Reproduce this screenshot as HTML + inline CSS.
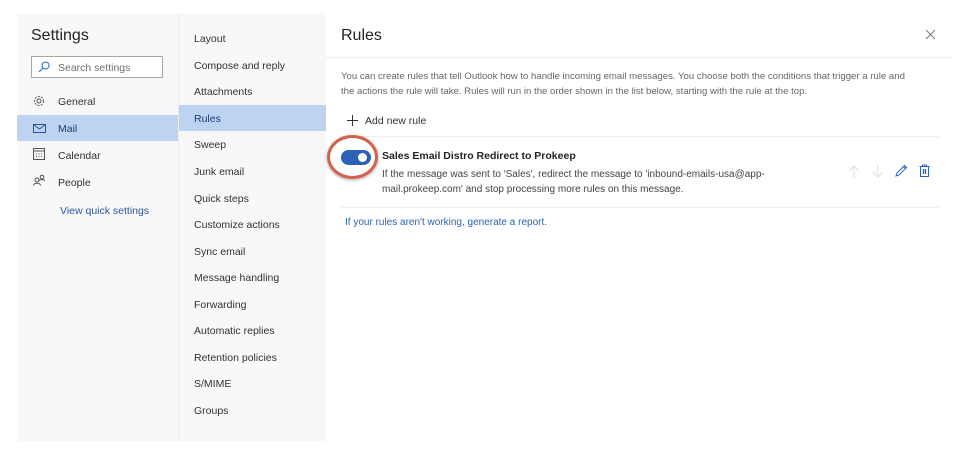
<!DOCTYPE html>
<html><head><style>
*{margin:0;padding:0;box-sizing:border-box}
body{width:980px;height:462px;background:#fff;font-family:"Liberation Sans",sans-serif;position:relative;overflow:hidden;color:#323130}
.a{position:absolute}
.nav{left:17px;top:13px;width:161px;height:428px;background:#f8f8f8}
.mid{left:178px;top:13px;width:148px;height:428px;background:#f8f8f8;border-left:1px solid #ececec}
.mi{position:absolute;left:15px;font-size:10.5px;color:#323130;white-space:nowrap}
.ni{position:absolute;left:41px;font-size:10.5px}
.ic{position:absolute;left:16px}
</style></head><body>
<div class="a nav">
 <div class="a" style="left:14px;top:14px;font-size:16px;color:#252423">Settings</div>
 <div class="a" style="left:14px;top:43px;width:132px;height:22px;border:1px solid #a6a6a6;background:#fff">
  <svg class="a" style="left:6px;top:4px" width="12" height="12" viewBox="0 0 12 12"><circle cx="7.5" cy="4.5" r="3.5" fill="none" stroke="#2b6ac2" stroke-width="1"/><path d="M5 7L1 11" stroke="#2b6ac2" stroke-width="1.1"/></svg>
  <div class="a" style="left:26px;top:5px;font-size:10.5px;color:#707070">Search settings</div>
 </div>
 <svg class="ic" style="top:82px" width="12" height="12" viewBox="0 0 12 12"><circle cx="6" cy="6" r="2" fill="none" stroke="#555"/><circle cx="6" cy="6" r="4.5" fill="none" stroke="#555" stroke-dasharray="2 1.3"/></svg>
 <div class="ni" style="top:83px">General</div>
 <div class="a" style="left:0;top:102px;width:161px;height:26px;background:#bcd4f2"></div>
 <svg class="ic" style="top:111px" width="13" height="9" viewBox="0 0 13 9"><rect x="0.5" y="0.5" width="12" height="8" fill="none" stroke="#2b579a"/><path d="M0.5 0.5L6.5 5L12.5 0.5" fill="none" stroke="#2b579a"/></svg>
 <div class="ni" style="top:110px;color:#1f3f73">Mail</div>
 <svg class="ic" style="top:135px" width="12" height="12" viewBox="0 0 12 12"><rect x="0.5" y="0.5" width="11" height="11" fill="none" stroke="#555"/><path d="M0.5 3h11M3 6h1M5.5 6h1M8 6h1M3 8.5h1M5.5 8.5h1M8 8.5h1" stroke="#555"/></svg>
 <div class="ni" style="top:137px">Calendar</div>
 <svg class="ic" style="top:161px" width="13" height="12" viewBox="0 0 13 12"><circle cx="4" cy="6" r="2" fill="none" stroke="#555"/><path d="M0.5 11.5c0-3 7-3 7 0" fill="none" stroke="#555"/><circle cx="9" cy="3" r="1.8" fill="none" stroke="#555"/><path d="M6.5 7c0-2 5-2 5 0" fill="none" stroke="#555"/></svg>
 <div class="ni" style="top:164px">People</div>
 <div class="a" style="left:43px;top:192px;font-size:10.5px;color:#2b579a">View quick settings</div>
</div>
<div class="a mid">
 <div class="mi" style="top:20px">Layout</div>
 <div class="mi" style="top:47px">Compose and reply</div>
 <div class="mi" style="top:73px">Attachments</div>
 <div class="a" style="left:0;top:92px;width:147px;height:26px;background:#bcd4f2"></div>
 <div class="mi" style="top:100px;color:#1f3f73">Rules</div>
 <div class="mi" style="top:126px">Sweep</div>
 <div class="mi" style="top:153px">Junk email</div>
 <div class="mi" style="top:180px">Quick steps</div>
 <div class="mi" style="top:206px">Customize actions</div>
 <div class="mi" style="top:233px">Sync email</div>
 <div class="mi" style="top:259px">Message handling</div>
 <div class="mi" style="top:286px">Forwarding</div>
 <div class="mi" style="top:312px">Automatic replies</div>
 <div class="mi" style="top:339px">Retention policies</div>
 <div class="mi" style="top:365px">S/MIME</div>
 <div class="mi" style="top:392px">Groups</div>
</div>
<div class="a" style="left:341px;top:27px;font-size:16px;color:#252423">Rules</div>
<svg class="a" style="left:925px;top:29px" width="11" height="11" viewBox="0 0 11 11"><path d="M1 1L10 10M10 1L1 10" stroke="#777" stroke-width="1"/></svg>
<div class="a" style="left:326px;top:57px;width:627px;height:1px;background:#ededed"></div>
<div class="a" style="left:341px;top:69px;width:566px;font-size:9.6px;line-height:15px;color:#666">You can create rules that tell Outlook how to handle incoming email messages. You choose both the conditions that trigger a rule and the actions the rule will take. Rules will run in the order shown in the list below, starting with the rule at the top.</div>
<svg class="a" style="left:347px;top:115px" width="11" height="11" viewBox="0 0 11 11"><path d="M5.5 0V11M0 5.5H11" stroke="#333" stroke-width="1"/></svg>
<div class="a" style="left:365px;top:115px;font-size:10.5px">Add new rule</div>
<div class="a" style="left:341px;top:136px;width:598px;height:1px;background:#efefef"></div>
<div class="a" style="left:327px;top:135px;width:51px;height:44px;border:3px solid #d4614d;border-radius:50%;box-shadow:0 1px 3px rgba(0,0,0,.35)"></div>
<div class="a" style="left:341px;top:150px;width:30px;height:15px;border-radius:8px;background:#2b62b7"></div>
<div class="a" style="left:358px;top:153px;width:9px;height:9px;border-radius:50%;background:#fff"></div>
<div class="a" style="left:382px;top:150px;font-size:10.5px;font-weight:bold;color:#252423">Sales Email Distro Redirect to Prokeep</div>
<div class="a" style="left:382px;top:167px;width:420px;font-size:10px;line-height:15px;color:#444">If the message was sent to 'Sales', redirect the message to 'inbound-emails-usa@app-mail.prokeep.com' and stop processing more rules on this message.</div>
<svg class="a" style="left:848px;top:165px" width="12" height="13" viewBox="0 0 12 13"><path d="M6 13V1M1 6L6 1L11 6" fill="none" stroke="#ddd"/></svg>
<svg class="a" style="left:872px;top:165px" width="12" height="13" viewBox="0 0 12 13"><path d="M6 0V12M1 7L6 12L11 7" fill="none" stroke="#ddd"/></svg>
<svg class="a" style="left:895px;top:164px" width="13" height="13" viewBox="0 0 13 13"><path d="M1 12L2 9L9.5 1.5L11.5 3.5L4 11Z M8.5 2.5L10.5 4.5" fill="none" stroke="#2b62b7"/></svg>
<svg class="a" style="left:919px;top:164px" width="11" height="13" viewBox="0 0 11 13"><path d="M0.5 2.5H10.5M3.5 2.5V1H7.5V2.5M1.5 2.5V12.5H9.5V2.5" fill="none" stroke="#2b62b7"/><path d="M4.5 5V10M6.5 5V10" stroke="#2b62b7" stroke-width="1.3"/></svg>
<div class="a" style="left:341px;top:207px;width:598px;height:1px;background:#efefef"></div>
<div class="a" style="left:345px;top:217px;font-size:10px;color:#2b62b7">If your rules aren't working, generate a report.</div>
</body></html>
